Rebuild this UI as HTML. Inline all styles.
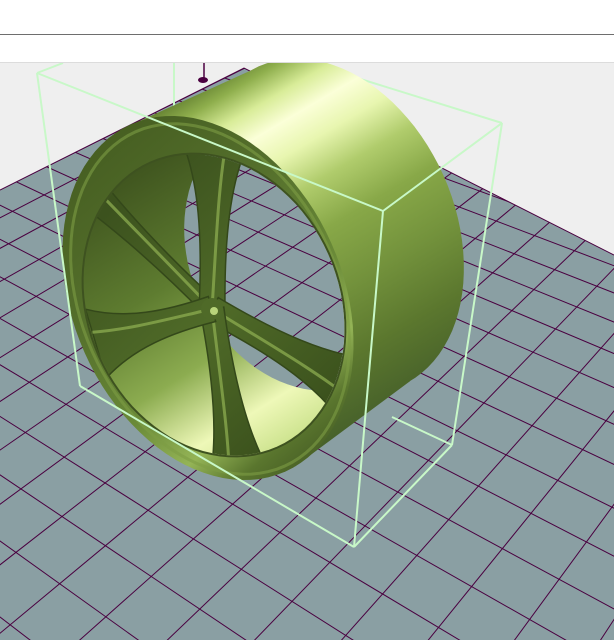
<!DOCTYPE html>
<html><head><meta charset="utf-8"><style>
html,body{margin:0;padding:0;background:#fff;overflow:hidden;width:614px;height:640px;}
svg{display:block;}
</style></head><body>
<svg id="s" xmlns="http://www.w3.org/2000/svg" width="614" height="640" viewBox="0 0 614 640">
<defs>
<clipPath id="floorClip"><polygon points="0,190 244,68 614,255 614,640 0,640"/></clipPath>
<clipPath id="viewClip"><rect x="0" y="63" width="614" height="577"/></clipPath>
<linearGradient id="rimG" gradientUnits="userSpaceOnUse" x1="70" y1="140" x2="350" y2="470">
<stop offset="0" stop-color="#445c20"/><stop offset="0.35" stop-color="#55702c"/>
<stop offset="0.6" stop-color="#6a8a38"/><stop offset="0.75" stop-color="#94b456"/>
<stop offset="0.85" stop-color="#5a762e"/><stop offset="1" stop-color="#3a4e1e"/>
</linearGradient>
<linearGradient id="barG" gradientUnits="userSpaceOnUse" x1="110" y1="160" x2="290" y2="450">
<stop offset="0" stop-color="#3a4e1c"/><stop offset="0.4" stop-color="#5e7c30"/>
<stop offset="0.65" stop-color="#8cac50"/><stop offset="0.85" stop-color="#eef8b8"/>
<stop offset="1" stop-color="#c8e088"/>
</linearGradient>
<linearGradient id="spG" gradientUnits="userSpaceOnUse" x1="120" y1="200" x2="320" y2="420">
<stop offset="0" stop-color="#3c521e"/><stop offset="0.5" stop-color="#4f6a28"/><stop offset="1" stop-color="#3a501c"/>
</linearGradient>
</defs>
<rect x="0" y="0" width="614" height="640" fill="#efefef"/>
<rect x="0" y="0" width="614" height="34" fill="#fff"/>
<rect x="0" y="34" width="614" height="1" fill="#6e6e6e"/>
<rect x="0" y="35" width="614" height="27" fill="#fff"/>
<rect x="0" y="62" width="614" height="1" fill="#dcdcdc"/>
<g clip-path="url(#viewClip)">
<polygon points="0,190 244,68 614,255 614,640 0,640" fill="#8a9fa3"/>
<g id="grid" clip-path="url(#floorClip)" stroke="#4a0040" stroke-width="1" fill="none"></g>
<polyline points="0,190 244,68 614,255" fill="none" stroke="#4a0040" stroke-width="1"/>
<line x1="204" y1="63" x2="204" y2="80" stroke="#4a0040" stroke-width="1.5"/>
<ellipse cx="203" cy="80" rx="5" ry="3" fill="#4a0040"/>
<g stroke="#c8f8c8" stroke-width="2" fill="none">
<line x1="309" y1="63" x2="502" y2="123"/>
<line x1="174" y1="63" x2="174" y2="110"/>
<line x1="452" y1="445" x2="392" y2="417"/>
</g>
<g id="wheel"></g>
<g stroke="#c8f8c8" stroke-width="2" fill="none">
<line x1="37" y1="73" x2="63" y2="63"/>
<line x1="37" y1="73" x2="383" y2="211"/>
<line x1="37" y1="73" x2="80" y2="386"/>
<line x1="80" y1="386" x2="354" y2="547"/>
<line x1="383" y1="211" x2="354" y2="547"/>
<line x1="383" y1="211" x2="502" y2="123"/>
<line x1="502" y1="123" x2="452" y2="445"/>
<line x1="452" y1="445" x2="354" y2="547"/>
</g>
</g>
</svg>
<script>
(function(){
var NS="http://www.w3.org/2000/svg";
function el(t,at,p){var e=document.createElementNS(NS,t);for(var k in at)e.setAttribute(k,at[k]);if(p)p.appendChild(e);return e;}
var A=-0.02594,B=0.03397,VA=[-1510,-540],VB=[1328,-470],O=[105,483];
function P(u,v){var d=A*u+B*v+1;return[(A*u*VA[0]+B*v*VB[0]+O[0])/d,(A*u*VA[1]+B*v*VB[1]+O[1])/d];}
function gridInto(g){
for(var k=-40;k<=40;k++){
 var vlo=Math.max(-80,(0.03-1-A*k)/B+0.01),p1=P(k,vlo),p2=P(k,400);
 el("line",{x1:p1[0].toFixed(1),y1:p1[1].toFixed(1),x2:p2[0].toFixed(1),y2:p2[1].toFixed(1)},g);
 var uhi=Math.min(80,(0.97+B*k)/(-A)-0.01),q1=P(-400,k),q2=P(uhi,k);
 el("line",{x1:q1[0].toFixed(1),y1:q1[1].toFixed(1),x2:q2[0].toFixed(1),y2:q2[1].toFixed(1)},g);
}}
gridInto(document.getElementById("grid"));

var W=document.getElementById("wheel");
var th=-24*Math.PI/180,ct=Math.cos(th),st=Math.sin(th);
var C=[208,298],a=135,b=190,D=[122,-72],S=0.92;
function ept(c,a,b,t){var x=a*Math.cos(t),y=b*Math.sin(t);return[c[0]+ct*x-st*y,c[1]+st*x+ct*y];}
function ellD(c,a,b){var s="";for(var i=0;i<96;i++){var p=ept(c,a,b,i/96*2*Math.PI);s+=(i?"L":"M")+p[0].toFixed(1)+","+p[1].toFixed(1);}return s+"Z";}
function ell(c,a,b,at,p){at=at||{};at.d=ellD(c,a,b);return el("path",at,p);}
var dl=Math.hypot(D[0],D[1]),n=[-D[1]/dl,D[0]/dl];
var nx=ct*n[0]+st*n[1],ny=-st*n[0]+ct*n[1];
var t1=Math.atan2(b*ny,a*nx),t2=t1+Math.PI;
var BC=[C[0]+D[0],C[1]+D[1]];
var f1=ept(C,a,b,t1),f2=ept(C,a,b,t2),b1=ept(BC,a*S,b*S,t1),b2=ept(BC,a*S,b*S,t2);
var h=Math.sqrt(Math.pow(a*nx,2)+Math.pow(b*ny,2));
var mid=[(C[0]+BC[0])/2,(C[1]+BC[1])/2];
var defs=document.querySelector("defs");
var lg=el("linearGradient",{id:"bodyG",gradientUnits:"userSpaceOnUse",x1:mid[0]-n[0]*h,y1:mid[1]-n[1]*h,x2:mid[0]+n[0]*h,y2:mid[1]+n[1]*h},defs);
[[0,"#5f7c2e"],[0.06,"#8eae4c"],[0.13,"#d8ec98"],[0.2,"#fbffd8"],[0.28,"#e8f6b0"],[0.38,"#b0cc6c"],[0.5,"#88a848"],[0.66,"#73923c"],[0.83,"#5b772e"],[1,"#46602a"]].forEach(function(s){el("stop",{offset:s[0],"stop-color":s[1]},lg);});
ell(BC,a*S,b*S,{fill:"url(#bodyG)"},W);
el("polygon",{points:[f1,b1,b2,f2].map(function(p){return p[0].toFixed(1)+","+p[1].toFixed(1);}).join(" "),fill:"url(#bodyG)"},W);
ell(C,a,b,{fill:"url(#rimG)"},W);
ell([C[0]+2,C[1]+1],a-6,b-7,{fill:"none",stroke:"#7d9c44","stroke-width":3,opacity:0.6},W);
var IC=[214,305],ia=125,ib=155;
ell(IC,ia+2,ib+2,{fill:"#3e5220"},W);
ell(IC,ia,ib,{fill:"url(#barG)"},W);
var cp=el("clipPath",{id:"openClip"},defs);ell(IC,ia,ib,{},cp);
var cp2=el("clipPath",{id:"lensClip"},defs);ell([IC[0]+D[0]*0.75,IC[1]+D[1]*0.75],ia*0.93,ib*0.93,{},cp2);
var g1=el("g",{"clip-path":"url(#openClip)"},W);
var g2=el("g",{"clip-path":"url(#lensClip)"},g1);
el("rect",{x:0,y:60,width:614,height:580,fill:"#8a9fa3"},g2);
var gg=el("g",{stroke:"#4a0040","stroke-width":1,fill:"none"},g2);gridInto(gg);
var H=[212,309];
var spokes=[[[97,198],36,9],[[215,158],70,13],[[340,380],70,13],[[236,455],60,12],[[115,338],72,13]];
var sg=el("g",{"clip-path":"url(#openClip)"},W);
function f(x){return x.toFixed(1);}
spokes.forEach(function(s){
 var E=s[0],w=s[1],hw=s[2];var dx=E[0]-H[0],dy=E[1]-H[1],L=Math.hypot(dx,dy);var ux=dx/L,uy=dy/L,px=-uy,py=ux;
 var e1=[E[0]+ux*20,E[1]+uy*20];
 var c1=[H[0]+dx*0.45,H[1]+dy*0.45],c2=[H[0]+dx*0.85,H[1]+dy*0.85];
 var d="M"+f(H[0]+px*hw)+","+f(H[1]+py*hw)+" C"+f(c1[0]+px*(hw-2))+","+f(c1[1]+py*(hw-2))+" "+f(c2[0]+px*(hw+2))+","+f(c2[1]+py*(hw+2))+" "+f(e1[0]+px*w/2)+","+f(e1[1]+py*w/2)+
 " L"+f(e1[0]-px*w/2)+","+f(e1[1]-py*w/2)+" C"+f(c2[0]-px*(hw+2))+","+f(c2[1]-py*(hw+2))+" "+f(c1[0]-px*(hw-2))+","+f(c1[1]-py*(hw-2))+" "+f(H[0]-px*hw)+","+f(H[1]-py*hw)+"Z";
 el("path",{d:d,fill:"url(#spG)",stroke:"#34481a","stroke-width":1.5},sg);
 el("path",{d:"M"+H[0]+","+H[1]+" C"+f(c1[0]+px*3)+","+f(c1[1]+py*3)+" "+f(c2[0]+px*4)+","+f(c2[1]+py*4)+" "+f(e1[0]+px*w/6)+","+f(e1[1]+py*w/6),fill:"none",stroke:"#8cac50","stroke-width":3,opacity:0.75},sg);
});
el("circle",{cx:H[0],cy:H[1],r:11,fill:"#4f6a28"},W);
el("circle",{cx:H[0]+2,cy:H[1]+2,r:4,fill:"#b8d47a"},W);
})();
</script>
</body></html>
